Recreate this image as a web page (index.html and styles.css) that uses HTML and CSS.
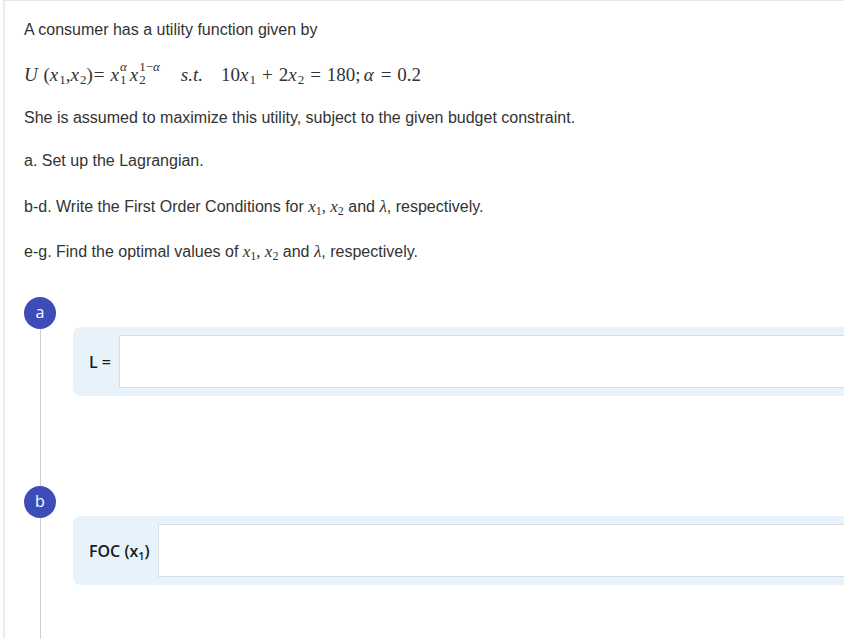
FILE: index.html
```html
<!DOCTYPE html>
<html>
<head>
<meta charset="utf-8">
<link rel="stylesheet" href="styles.css">
</head>
<body>
<div class="card">
  <p class="para">A consumer has a utility function given by</p>
  <p class="para math-line"><span class="m"><i>U</i> (<i>x</i><sub>1</sub>,<i>x</i><sub>2</sub>)<span class="rel-r">=</span><i>x</i><span class="ss"><span class="sup"><i>α</i></span><span class="sub">1</span></span><i>x</i><span class="ss"><span class="sup">1−<i>α</i></span><span class="sub">2</span></span></span><span class="m st"><i>s.t.</i></span><span class="m">10<i>x</i><sub>1</sub><span class="bin">+</span>2<i>x</i><sub>2</sub><span class="rel">=</span>180;<span class="thin"></span><i>α</i><span class="rel">=</span>0.2</span></p>
  <p class="para">She is assumed to maximize this utility, subject to the given budget constraint.</p>
  <p class="para">a. Set up the Lagrangian.</p>
  <p class="para has-math bd">b-d. Write the First Order Conditions for <span class="mi"><i>x</i><sub>1</sub>, <i>x</i><sub>2</sub></span> and <span class="mi"><i>λ</i></span>, respectively.</p>
  <p class="para has-math">e-g. Find the optimal values of <span class="mi"><i>x</i><sub>1</sub>, <i>x</i><sub>2</sub></span> and <span class="mi"><i>λ</i></span>, respectively.</p>

  <div class="steps">
    <div class="step">
      <div class="rail"><div class="badge">a</div><div class="line"></div></div>
      <div class="step-body">
        <div class="panel">
          <span class="label">L =</span>
          <div class="answer"></div>
        </div>
      </div>
    </div>
    <div class="step">
      <div class="rail"><div class="badge">b</div><div class="line"></div></div>
      <div class="step-body">
        <div class="panel">
          <span class="label">FOC (x<sub>1</sub>)</span>
          <div class="answer"></div>
        </div>
      </div>
    </div>
  </div>
</div>
</body>
</html>
```
FILE: styles.css
```css
html, body {
  margin: 0;
  padding: 0;
  overflow: hidden;
  background: #fff;
}
body {
  font-family: "Liberation Sans", Arial, sans-serif;
  color: #333;
  font-size: 16px;
}
.card {
  margin-left: 3px;
  width: 1100px;
  border-top: 1px solid #e6e6e6;
  border-left: 2px solid #ececec;
  padding: 19px 0 0 19px;
  min-height: 700px;
}
.para {
  margin: 0 0 23px;
  line-height: 20px;
}
.para.has-math {
  padding-top: 3px;
}
.para.bd {
  margin-bottom: 22px;
}
.math-line {
  margin-top: 25px;
  margin-bottom: 22px;
}
.m {
  font-family: "Liberation Serif", "DejaVu Serif", serif;
  font-size: 19px;
  color: #333;
}
.m i {
  margin-right: 1px;
}
.st {
  margin: 0 17px 0 20px;
}
.rel {
  margin: 0 6px;
}
.rel-r {
  margin: 0 6px 0 1px;
}
.bin {
  margin: 0 6px;
}
.thin {
  display: inline-block;
  width: 3px;
}
.m sub, .mi sub {
  font-size: 12px;
  font-style: normal;
  vertical-align: -3px;
  line-height: 0;
}
.m sub {
  font-size: 13px;
}
.ss {
  display: inline-flex;
  flex-direction: column;
  font-size: 13px;
  line-height: 13px;
  vertical-align: 10px;
  margin: -6px 2px -6px 0;
}
.ss .sup {
  white-space: nowrap;
}
.m .ss:last-child {
  margin-right: 0;
}
.mi {
  font-family: "Liberation Serif", "DejaVu Serif", serif;
  font-size: 17px;
}
.steps {
  margin-top: 35px;
}
.step {
  display: flex;
}
.rail {
  width: 32px;
  display: flex;
  flex-direction: column;
  align-items: center;
}
.badge {
  width: 32px;
  height: 32px;
  border-radius: 50%;
  background: #3d4db7;
  color: #fff;
  font-family: "Open Sans", "Noto Sans", sans-serif;
  font-size: 16px;
  line-height: 30px;
  text-align: center;
  flex: none;
}
.line {
  flex: 1;
  width: 1px;
  background: #cfcfcf;
}
.step-body {
  flex: 1;
  padding: 30px 0 90px 17px;
}
.panel {
  display: flex;
  align-items: center;
  background: #e8f2fb;
  border-radius: 8px;
  padding: 8px 0 8px 16px;
  height: 53px;
}
.label {
  font-family: "Open Sans", "Noto Sans", sans-serif;
  font-weight: 600;
  font-size: 16px;
  color: #1a1a1a;
  margin-right: 8px;
  white-space: nowrap;
}
.label sub {
  font-size: 11px;
  vertical-align: -3px;
  line-height: 0;
}
.answer {
  flex: 1;
  align-self: stretch;
  background: #fff;
  border: 1px solid #d8dde3;
}
```
